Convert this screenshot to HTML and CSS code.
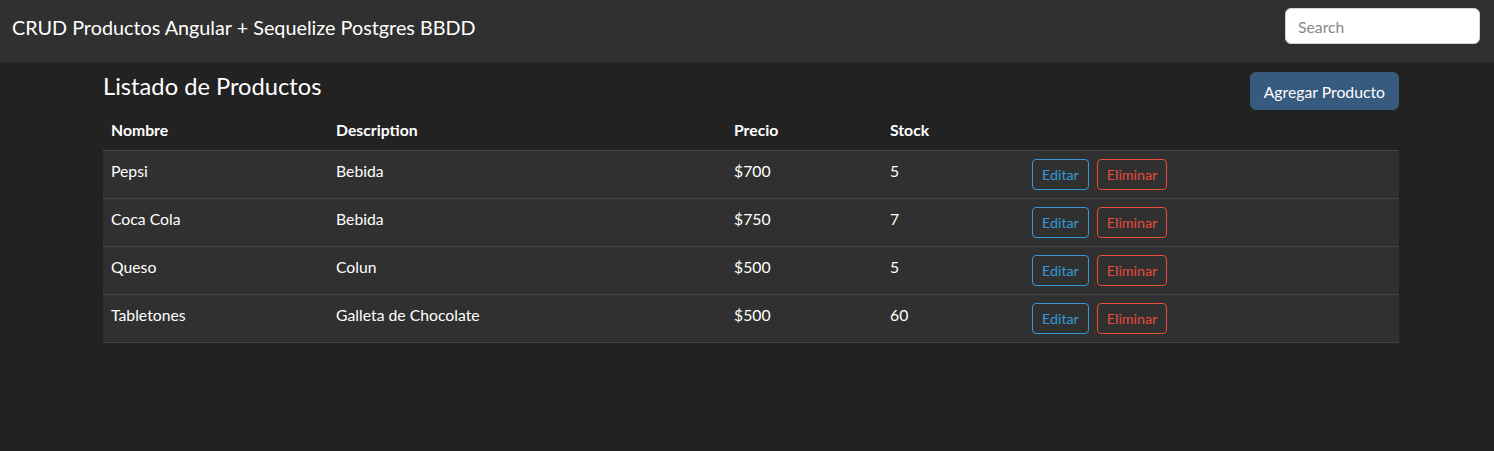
FILE: index.html
```html
<!DOCTYPE html>
<html lang="es">
<head>
  <meta charset="UTF-8" />
  <meta name="viewport" content="width=device-width, initial-scale=1.0" />
  <title>CRUD Productos</title>
  <link rel="stylesheet" href="styles.css">
</head>
<body>
  <nav class="navbar">
    <span class="brand">CRUD Productos Angular + Sequelize Postgres BBDD</span>
    <input class="search" type="text" placeholder="Search" />
  </nav>

  <main class="container">
    <div class="page-head">
      <h4 class="title">Listado de Productos</h4>
      <button class="btn-primary">Agregar Producto</button>
    </div>

    <table class="products">
      <thead>
        <tr>
          <th class="col-name">Nombre</th>
          <th class="col-desc">Description</th>
          <th class="col-price">Precio</th>
          <th class="col-stock">Stock</th>
          <th></th>
        </tr>
      </thead>
      <tbody>
        <tr>
          <td>Pepsi</td>
          <td>Bebida</td>
          <td>$700</td>
          <td>5</td>
          <td class="actions"><button class="btn-sm edit">Editar</button><button class="btn-sm delete">Eliminar</button></td>
        </tr>
        <tr>
          <td>Coca Cola</td>
          <td>Bebida</td>
          <td>$750</td>
          <td>7</td>
          <td class="actions"><button class="btn-sm edit">Editar</button><button class="btn-sm delete">Eliminar</button></td>
        </tr>
        <tr>
          <td>Queso</td>
          <td>Colun</td>
          <td>$500</td>
          <td>5</td>
          <td class="actions"><button class="btn-sm edit">Editar</button><button class="btn-sm delete">Eliminar</button></td>
        </tr>
        <tr>
          <td>Tabletones</td>
          <td>Galleta de Chocolate</td>
          <td>$500</td>
          <td>60</td>
          <td class="actions"><button class="btn-sm edit">Editar</button><button class="btn-sm delete">Eliminar</button></td>
        </tr>
      </tbody>
    </table>
  </main>
</body>
</html>
```

FILE: styles.css
```css
body {
  margin: 0;
  background-color: #222222;
  color: #ffffff;
  font-family: Lato, "Open Sans", sans-serif;
  font-size: 15.75px;
  line-height: 1.5;
}
.navbar {
  background-color: #303030;
  height: 62px;
  display: flex;
  align-items: flex-start;
  justify-content: space-between;
  padding: 8px 14px 0 12px;
  box-sizing: border-box;
}
.brand {
  font-size: 19.8px;
  line-height: 38px;
  color: #ffffff;
}
.search {
  width: 195px;
  height: 36px;
  box-sizing: border-box;
  border: 1px solid #ced4da;
  border-radius: 6px;
  background: #ffffff;
  padding: 0 12px;
  font-family: Lato, sans-serif;
  font-size: 15.75px;
  color: #444;
}
.search::placeholder {
  color: #888888;
}
.container {
  width: 1296px;
  margin: 0 0 0 103px;
}
.page-head {
  display: flex;
  justify-content: space-between;
  align-items: flex-start;
  padding-top: 10px;
}
.title {
  margin: 0;
  font-size: 23.7px;
  font-weight: 400;
  line-height: 29px;
}
.btn-primary {
  background-color: #375a7f;
  color: #ffffff;
  border: 1px solid #375a7f;
  border-radius: 6px;
  height: 38px;
  padding: 0 13px;
  font-family: Lato, sans-serif;
  font-size: 15.75px;
  cursor: pointer;
}
.products {
  width: 100%;
  border-collapse: collapse;
  margin-top: 2px;
}
.products th,
.products td {
  text-align: left;
  vertical-align: top;
  padding: 8px;
  line-height: 24px;
  border-bottom: 1px solid #444444;
}
.products th {
  font-weight: 700;
  line-height: 22px;
  padding: 7px 8px 9px;
}
.products tbody tr {
  background-color: #303030;
}
.col-name { width: 209px; }
.col-desc { width: 382px; }
.col-price { width: 140px; }
.col-stock { width: 126px; }
.actions {
  font-size: 0;
}
.btn-sm {
  height: 31px;
  padding: 0 9px;
  margin-right: 8px;
  vertical-align: top;
  background: transparent;
  border-radius: 4px;
  font-family: Lato, sans-serif;
  font-size: 14.3px;
  cursor: pointer;
}
.edit {
  color: #3498db;
  border: 1px solid #3498db;
}
.delete {
  color: #e74c3c;
  border: 1px solid #e74c3c;
}
```
